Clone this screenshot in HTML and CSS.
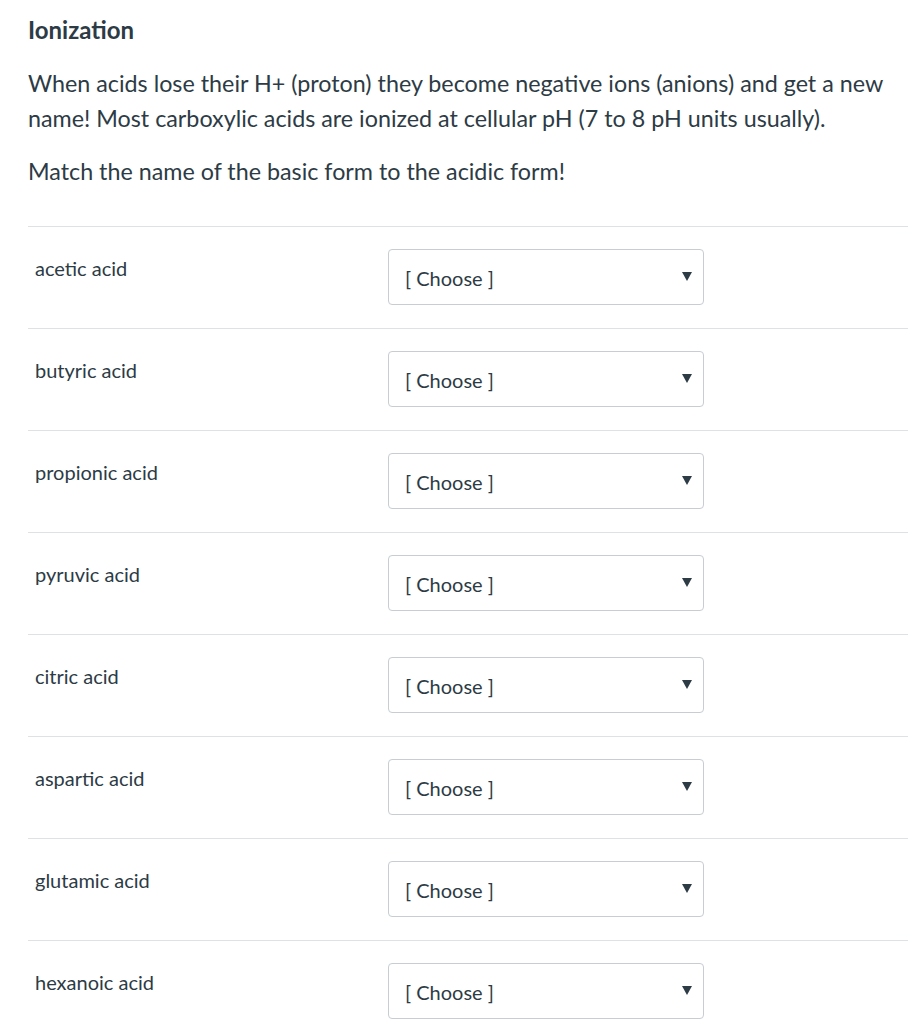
FILE: index.html
```html
<!DOCTYPE html>
<html>
<head>
<meta charset="utf-8">
<link rel="stylesheet" href="styles.css">
</head>
<body>
<div class="quiz">
  <h2 class="title">Ionization</h2>
  <p class="text">When acids lose their H+ (proton) they become negative ions (anions) and get a new name! Most carboxylic acids are ionized at cellular pH (7 to 8 pH units usually).</p>
  <p class="text match">Match the name of the basic form to the acidic form!</p>
  <div class="rows">
    <div class="row"><div class="label">acetic acid</div><div class="select"><span>[ Choose ]</span><span class="arrow"></span></div></div>
    <div class="row"><div class="label">butyric acid</div><div class="select"><span>[ Choose ]</span><span class="arrow"></span></div></div>
    <div class="row"><div class="label">propionic acid</div><div class="select"><span>[ Choose ]</span><span class="arrow"></span></div></div>
    <div class="row"><div class="label">pyruvic acid</div><div class="select"><span>[ Choose ]</span><span class="arrow"></span></div></div>
    <div class="row"><div class="label">citric acid</div><div class="select"><span>[ Choose ]</span><span class="arrow"></span></div></div>
    <div class="row"><div class="label">aspartic acid</div><div class="select"><span>[ Choose ]</span><span class="arrow"></span></div></div>
    <div class="row"><div class="label">glutamic acid</div><div class="select"><span>[ Choose ]</span><span class="arrow"></span></div></div>
    <div class="row"><div class="label">hexanoic acid</div><div class="select"><span>[ Choose ]</span><span class="arrow"></span></div></div>
  </div>
</div>
</body>
</html>
```
FILE: styles.css
```css
html, body {
  margin: 0;
  padding: 0;
  background: #ffffff;
}
body {
  font-family: Lato, "Open Sans", sans-serif;
  color: #2d3b45;
}
.quiz {
  padding: 14px 0 0 28px;
}
.title {
  margin: 0;
  font-size: 24px;
  font-weight: 700;
  line-height: 32px;
}
.text {
  margin: 20px 0 0 0;
  font-size: 23.3px;
  line-height: 35px;
}
.match {
  margin-top: 18px;
}
.rows {
  margin-top: 37px;
}
.row {
  display: flex;
  align-items: flex-start;
  border-top: 1px solid #dfe2e4;
  padding: 22px 0 23px 0;
}
.label {
  width: 353px;
  padding: 4px 0 0 7px;
  font-size: 20px;
  line-height: 30px;
}
.select {
  box-sizing: border-box;
  width: 316px;
  height: 56px;
  border: 1px solid #c7cdd1;
  border-radius: 4px;
  display: flex;
  align-items: center;
  justify-content: space-between;
  padding: 2px 11px 0 16px;
  font-size: 20px;
}
.arrow {
  width: 0;
  height: 0;
  border-left: 5px solid transparent;
  border-right: 5px solid transparent;
  border-top: 9px solid #2d3b45;
  margin-top: -3px;
}
```
